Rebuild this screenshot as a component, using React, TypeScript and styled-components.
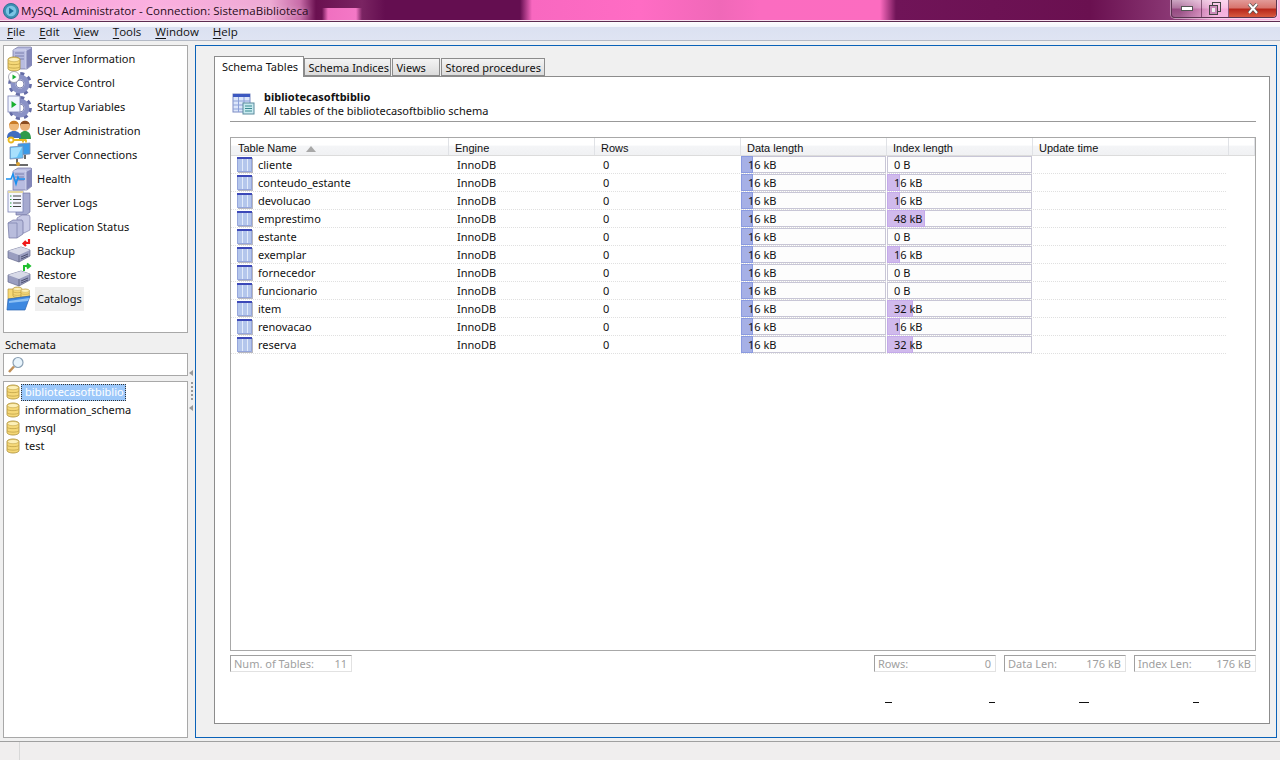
import React from 'react'
import styled, { createGlobalStyle } from 'styled-components'

const GlobalStyle = createGlobalStyle`
  html, body { margin: 0; padding: 0; height: 100%; overflow: hidden; }
  body { font-family: "Noto Sans", Tahoma, sans-serif; font-size: 11px; color: #111; background: #f0f0f0; }
  #root { height: 100%; }
`

const Window = styled.div`
  width: 1280px;
  height: 760px;
  display: flex;
  flex-direction: column;
  background: #f0f0f0;
`
const TitleBar = styled.div`
  height: 21px;
  flex: none;
  display: flex;
  align-items: center;
  padding-left: 3px;
  gap: 2px;
  position: relative;
  border-bottom: 1px solid #5c2c50;
  background:
    linear-gradient(180deg, transparent 20px, #f6dcec 20px),
    linear-gradient(90deg, rgba(240,110,190,0), #f070c0 6px, #f478c6 34px, rgba(240,110,190,0)) 322px 8px / 40px 12px no-repeat,
    linear-gradient(90deg, #f8a0d8 0, #fbb0e0 150px, #eeaad4 270px, #c86ca8 300px, #6a1050 316px, #7a2462 362px, #640e50 385px, #640e50 520px, #f868c0 532px, #ff6cc4 640px, #f068b8 720px, #fb6cc0 760px, #fc6cc0 880px, #701458 896px, #6a1050 1090px, #8e3c78 1180px, #f4a4d8 1215px, #fbb6e2 1280px);
`
const TitleText = styled.span`
  font-family: "Open Sans", "Noto Sans", sans-serif;
  font-size: 11.55px;
  color: #2a0a20;
  text-shadow: 0 0 6px rgba(255,255,255,.55);
`
const CaptionButtons = styled.div`
  position: absolute;
  right: 3px;
  top: 0;
  height: 17px;
  display: flex;
  border: 1px solid #5a3450;
  border-top: none;
  border-radius: 0 0 4px 4px;
  overflow: hidden;
  box-shadow: 0 0 0 1px rgba(255,255,255,.45);
`
const CaptionButton = styled.div<{ $w: number; $close?: boolean }>`
  width: ${p => p.$w}px;
  display: flex;
  align-items: center;
  justify-content: center;
  border-right: 1px solid rgba(60,20,50,.55);
  background: ${p => p.$close
    ? 'linear-gradient(180deg, #e29a98 0, #d8756e 45%, #b8281c 55%, #d85a40 100%)'
    : 'linear-gradient(180deg, rgba(255,255,255,.55) 0, rgba(255,255,255,.3) 45%, rgba(255,255,255,.08) 55%, rgba(255,255,255,.18) 100%)'};
  &:last-child { border-right: none; }
`
const MenuBar = styled.div`
  height: 18px;
  flex: none;
  display: flex;
  align-items: center;
  padding-left: 7px;
  gap: 14px;
  border-bottom: 1px solid #b4bac6;
  background: linear-gradient(180deg, #fdfdfe 0, #f3f5fb 25%, #dbe1f1 30%, #dfe4f3 100%);
`
const MenuItem = styled.span`
  font-family: "Open Sans", "Noto Sans", sans-serif;
  font-size: 11.5px;
  u { text-underline-offset: 2px; }
`
const Body = styled.div`
  flex: 1;
  min-height: 0;
  display: flex;
  padding: 4px 3px 3px 3px;
`
const Side = styled.div`
  width: 185px;
  flex: none;
  display: flex;
  flex-direction: column;
`
const NavPanel = styled.div`
  height: 288px;
  flex: none;
  box-sizing: border-box;
  background: #fff;
  border: 1px solid #a8a8a8;
  padding: 1px 0 0 2px;
`
const NavRow = styled.div`
  height: 24px;
  display: flex;
  align-items: center;
`
const NavIcon = styled.svg`
  width: 26px;
  height: 26px;
  flex: none;
  margin-right: 3px;
`
const NavLabel = styled.span<{ $active?: boolean }>`
  height: 24px;
  line-height: 24px;
  padding: 0 2px;
  background: ${p => (p.$active ? '#efefef' : 'transparent')};
`
const SectionLabel = styled.div`
  height: 20px;
  line-height: 24px;
  padding-left: 2px;
`
const SearchBox = styled.div`
  height: 23px;
  box-sizing: border-box;
  border: 1px solid #a8a8a8;
  background: #fff;
  padding: 2px 0 0 3px;
  display: flex;
`
const SchemaList = styled.div`
  flex: 1;
  margin-top: 5px;
  box-sizing: border-box;
  border: 1px solid #a8a8a8;
  background: #fff;
  padding: 1px 0 0 1px;
`
const SchemaRow = styled.div`
  height: 18px;
  display: flex;
  align-items: center;
  gap: 0;
`
const SchemaName = styled.span<{ $active?: boolean }>`
  padding: 0 2px 0 4px;
  height: 17px;
  line-height: 16px;
  color: ${p => (p.$active ? '#fff' : '#111')};
  background: ${p => (p.$active ? '#9cc8fa' : 'transparent')};
  outline: ${p => (p.$active ? '1px dotted #333' : 'none')};
  outline-offset: -1px;
`
const Splitter = styled.div`
  width: 7px;
  flex: none;
  position: relative;
`
const ArrowMark = styled.i<{ $top: number }>`
  position: absolute;
  left: 1px;
  top: ${p => p.$top}px;
  border: 3px solid transparent;
  border-right: 4px solid #999;
  border-left: none;
`
const Grip = styled.i`
  position: absolute;
  left: 3px;
  top: 337px;
  width: 2px;
  height: 18px;
  background: repeating-linear-gradient(180deg, #999 0 2px, transparent 2px 4px);
`
const Main = styled.div`
  flex: 1;
  box-sizing: border-box;
  border: 1px solid #0a62b8;
  padding: 10px 6px 13px 18px;
  display: flex;
  flex-direction: column;
`
const Tabs = styled.div`
  height: 20px;
  flex: none;
  display: flex;
  align-items: flex-end;
  position: relative;
  z-index: 1;
`
const Tab = styled.div<{ $active?: boolean; $w: number }>`
  box-sizing: border-box;
  width: ${p => p.$w}px;
  height: ${p => (p.$active ? 21 : 18)}px;
  margin-bottom: ${p => (p.$active ? -1 : 0)}px;
  padding-left: ${p => (p.$active ? 7 : 3.5)}px;
  line-height: ${p => (p.$active ? 19 : 18)}px;
  white-space: nowrap;
  border: 1px solid #8c8c8c;
  border-bottom: ${p => (p.$active ? 'none' : '1px solid #8c8c8c')};
  margin-right: ${p => (p.$active ? 0 : 1)}px;
  background: ${p => (p.$active ? '#fff' : 'linear-gradient(180deg, #f4f4f4, #dcdcdc)')};
`
const TabBody = styled.div`
  flex: 1;
  box-sizing: border-box;
  border: 1px solid #8c8c8c;
  background: #fff;
  padding: 13px 13px 0 15px;
  display: flex;
  flex-direction: column;
`
const Heading = styled.div`
  height: 31px;
  flex: none;
  display: flex;
  border-bottom: 1px solid #999;
`
const HeadingIcon = styled.svg`
  width: 24px;
  height: 24px;
  margin: 3px 8px 0 2px;
`
const HeadingText = styled.div`
  line-height: 14px;
  b { font-weight: 700; display: block; }
`
const TableBox = styled.div`
  margin-top: 15px;
  height: 514px;
  flex: none;
  box-sizing: border-box;
  border: 1px solid #a8a8a8;
`
const HeaderRow = styled.div`
  height: 17px;
  display: flex;
  border-bottom: 1px solid #dcdcdc;
  background: linear-gradient(180deg, #fff 0, #fff 40%, #f4f5f7 50%, #f0f1f3 100%);
`
const HeaderCell = styled.div<{ $w?: number }>`
  ${p => (p.$w ? `width: ${p.$w}px; flex: none;` : 'flex: 1;')}
  box-sizing: border-box;
  padding: 4px 0 0 6px;
  line-height: 13px;
  border-right: 1px solid #e0e2e6;
  display: flex;
  align-items: center;
  font-family: "Liberation Sans", sans-serif;
  font-size: 11px;
  gap: 9px;
  &:first-child { padding-left: 7px; }
`
const SortMark = styled.i`
  border: 5px solid transparent;
  border-bottom: 6px solid #a8a8a8;
  border-top: none;
`
const DataRow = styled.div`
  height: 18px;
  width: 995px;
  display: flex;
  align-items: center;
  border-bottom: 1px dotted #e0e0e0;
  box-sizing: border-box;
`
const NameCell = styled.div`
  width: 219px;
  flex: none;
  display: flex;
  align-items: center;
  padding-left: 6px;
  box-sizing: border-box;
  gap: 5px;
`
const TextCell = styled.div<{ $w: number }>`
  width: ${p => p.$w}px;
  flex: none;
  box-sizing: border-box;
  padding-left: 7px;
`
const BarCell = styled.div<{ $w: number }>`
  width: ${p => p.$w}px;
  flex: none;
  height: 17px;
  box-sizing: border-box;
  border: 1px solid #c8c6d6;
  background: #fdfdfd;
  position: relative;
  margin-right: 1px;
  line-height: 15px;
  padding-left: 6px;
`
const BarFill = styled.i<{ $kind: 'data' | 'index' }>`
  position: absolute;
  left: -1px;
  top: -1px;
  bottom: -1px;
  box-sizing: border-box;
  background: ${p => (p.$kind === 'data' ? '#a6b0e6' : '#d0baec')};
  border: 1px solid ${p => (p.$kind === 'data' ? '#8a9ae0' : '#c4aaea')};
`
const BarText = styled.span`
  position: relative;
`
const Summary = styled.div`
  margin-top: 4px;
  height: 17px;
  flex: none;
  display: flex;
  gap: 8px;
`
const SummaryBox = styled.div<{ $push?: boolean }>`
  width: 122px;
  box-sizing: border-box;
  margin-right: ${p => (p.$push ? 'auto' : '0')};
  border: 1px solid #e2e2e2;
  border-top-color: #a0a0a0;
  border-left-color: #a0a0a0;
  padding: 0 4px 0 3px;
  display: flex;
  justify-content: space-between;
  line-height: 15px;
  color: #a0a0a0;
`
const Dashes = styled.div`
  margin-top: 25px;
  height: 12px;
  position: relative;
`
const Dash = styled.i<{ $x: number; $w: number }>`
  position: absolute;
  left: ${p => p.$x}px;
  top: 5px;
  width: ${p => p.$w}px;
  height: 1px;
  background: #111;
`
const StatusBar = styled.div`
  height: 18px;
  flex: none;
  border-top: 1px solid #a0a0a0;
  background: #f0eeee;
  display: flex;
`
const StatusCell = styled.div`
  width: 19px;
  border-right: 1px solid #d8d8d8;
`

const Cyl = ({ x, y, s = 1 }: { x: number; y: number; s?: number }) => (
  <g transform={`translate(${x} ${y}) scale(${s})`}>
    <path d="M0 2.500C0 1 3 0 6 0s6 1 6 2.500v9C12 13 9 14 6 14s-6-1-6-2.500z" fill="#f5d878" stroke="#a88a30" strokeWidth=".8" />
    <ellipse cx="6" cy="2.600" rx="5.600" ry="2.100" fill="#fdf0b8" stroke="#b89a40" strokeWidth=".5" />
    <path d="M.5 6.500c1 1.500 10 1.500 11 0M.5 10c1 1.500 10 1.500 11 0" fill="none" stroke="#b89a40" strokeWidth=".7" />
  </g>
)

const Tower = ({ x = 6, y = 1 }: { x?: number; y?: number }) => (
  <g transform={`translate(${x} ${y})`}>
    <path d="M1 3l5-3h13l1 1v17l-5 4H1z" fill="#b8bce0" stroke="#7074a0" strokeWidth=".7" />
    <path d="M14 4l6-3v17l-6 4z" fill="#8286b8" />
    <path d="M1 3h13v19" fill="none" stroke="#e4e6f6" strokeWidth=".7" />
    <path d="M3 6h9M3 9h9M3 12h9" stroke="#7478a8" strokeWidth=".9" />
  </g>
)

const Gear = () => (
  <g>
    <circle cx="14" cy="14" r="10.200" fill="none" stroke="#646ca6" strokeWidth="3.400" strokeDasharray="4 4" />
    <circle cx="14" cy="14" r="7" fill="none" stroke="#8a92c6" strokeWidth="5" />
    <circle cx="14" cy="14" r="4" fill="#fff" stroke="#5e669e" strokeWidth=".8" />
  </g>
)

const Drive = () => (
  <g>
    <path d="M2 13l13-4 9 3v6l-11 6-11-4z" fill="#9a9ec0" stroke="#666a8e" strokeWidth=".7" />
    <path d="M2 13l11 4 11-5-9-3z" fill="#d8dae8" />
    <path d="M13 17v7" stroke="#5c607e" strokeWidth=".8" />
    <path d="M15 19l7-3M15 21l7-3" stroke="#4c5070" strokeWidth="1" />
  </g>
)

const icons: React.ReactNode[] = [
  <><Tower /><Cyl x={2} y={11} /></>,
  <><Gear /><circle cx="8" cy="7" r="5.500" fill="#fff" stroke="#8a8a9a" strokeWidth=".7" /><path d="M6.500 4.500l4 2.500-4 2.500z" fill="#18b030" /></>,
  <><Gear /><rect x="2" y="2" width="12" height="16" fill="#f0f4ff" stroke="#7c82b4" strokeWidth=".8" /><path d="M5.500 7l5 3.500-5 3.500z" fill="#18b030" /></>,
  <g transform="translate(0 1)">
    <circle cx="19" cy="7" r="5" fill="#e8b078" /><path d="M14 7c0-7 10-7 10 0l-1-2h-8z" fill="#8a4c20" />
    <path d="M13 20c0-6 3-8 6-8s6 2 6 8z" fill="#2f9a4a" />
    <circle cx="8" cy="7" r="5" fill="#eeb878" /><path d="M3 7c0-7 10-7 10 0l-1-2H4z" fill="#c87c28" />
    <path d="M1 19c0-5 3-7 7-7s7 2 7 7z" fill="#3f6cc0" />
    <circle cx="5" cy="21" r="2.500" fill="#fff" stroke="#e8b820" strokeWidth="1.800" /><path d="M7.500 21h13M17 21v2.500M20 21v2.500" stroke="#e8b820" strokeWidth="1.800" fill="none" />
  </g>,
  <>
    <path d="M12 2l12-1v11l-12 1z" fill="#3a9ae8" stroke="#7a8ab0" strokeWidth=".8" />
    <path d="M4 5l13-1v12l-13 1z" fill="#66c4f8" stroke="#7a8ab0" strokeWidth=".8" />
    <path d="M5 6l11-1-5 10-6 1z" fill="#a8e0fc" />
    <path d="M11 17v4M19 13v4M3 23h19" stroke="#3a3a3a" strokeWidth="1.500" fill="none" /><circle cx="12" cy="22" r="2" fill="#d8a030" />
  </>,
  <><Tower x={6} y={2} /><path d="M0 13h5l2-5 3 10 2-7 1 2h6" fill="none" stroke="#1890f0" strokeWidth="1.500" /></>,
  <>
    <path d="M10 3h14v19l-4 3H10z" fill="#a6aad0" stroke="#7074a0" strokeWidth=".7" />
    <rect x="2" y="1" width="15" height="21" fill="#f4f6ff" stroke="#7c82b4" strokeWidth=".8" />
    <path d="M2 1h15v2H2z" fill="#e4d8a0" />
    <path d="M7 6h8M7 9.500h8M7 13h8M7 16.500h8" stroke="#444" strokeWidth="1" /><path d="M4 6h1.500M4 9.500h1.500M4 13h1.500M4 16.500h1.500" stroke="#2a9a40" strokeWidth="1" />
  </>,
  <>
    <path d="M11 4l5-3h7l1 2v13l-6 3h-7z" fill="#c8cae6" stroke="#7c80aa" strokeWidth=".7" />
    <path d="M2 9l5-3h9l1 2v12l-6 4H3z" fill="#b8bcdc" stroke="#7074a0" strokeWidth=".7" />
    <path d="M2 9h9v15" fill="none" stroke="#8286b0" strokeWidth=".8" />
  </>,
  <><Drive /><path d="M23 1v4h-5M20 3l-2.500 2.500L20 8" stroke="#f01818" strokeWidth="2.200" fill="none" /></>,
  <><Drive /><path d="M18 9V4h5M21 1.500L24 4l-3 2.500" stroke="#20c030" strokeWidth="2" fill="none" /></>,
  <>
    <path d="M2 3h10l2 2h8v8H2z" fill="#f6d874" stroke="#b89a40" strokeWidth=".7" />
    <Cyl x={7} y={1} s={0.75} /><Cyl x={15} y={3} s={0.7} />
    <path d="M2 13l22-3-5 14H1z" fill="#3d88e0" stroke="#2a62b0" strokeWidth=".7" />
    <path d="M3 15l20-3-1 3-19 2z" fill="#8cc0f4" />
  </>
]

const navItems = ['Server Information', 'Service Control', 'Startup Variables', 'User Administration', 'Server Connections', 'Health', 'Server Logs', 'Replication Status', 'Backup', 'Restore', 'Catalogs']

const rows: [string, number, number][] = [
  ['cliente', 16, 0], ['conteudo_estante', 16, 16], ['devolucao', 16, 16], ['emprestimo', 16, 48],
  ['estante', 16, 0], ['exemplar', 16, 16], ['fornecedor', 16, 0], ['funcionario', 16, 0],
  ['item', 16, 32], ['renovacao', 16, 16], ['reserva', 16, 32]
]

const size = (n: number) => (n ? `${n} kB` : '0 B')

const TableIcon = () => (
  <svg width="16" height="16" viewBox="0 0 16 16">
    <rect x="0" y="0" width="15" height="15" fill="#b4c6ec" />
    <rect x="0" y="0" width="15" height="2" fill="#3c48b8" />
    <path d="M.5 2v12.500h14V2" fill="none" stroke="#96a6dc" />
    <path d="M5.500 2v12M10.500 2v12" stroke="#e2eafa" />
    <path d="M1 15.500h15M15.500 1v15" stroke="#b8b8c0" />
  </svg>
)

export default function App() {
  return (
    <Window>
      <GlobalStyle />
      <TitleBar>
        <svg width="16" height="16" viewBox="0 0 17 17">
          <circle cx="8.500" cy="8.500" r="8" fill="#3e8fb4" stroke="#2a6e90" />
          <circle cx="8.500" cy="8.500" r="5.500" fill="#7cc4e4" />
          <path d="M6.500 5l5 3.500-5 3.500z" fill="#1c6c98" />
        </svg>
        <TitleText>MySQL Administrator - Connection: SistemaBiblioteca</TitleText>
        <CaptionButtons>
          <CaptionButton $w={29}>
            <svg width="12" height="6" viewBox="0 0 12 6"><rect x=".5" y=".5" width="11" height="4" fill="#fff" stroke="#555" /></svg>
          </CaptionButton>
          <CaptionButton $w={26}>
            <svg width="12" height="13" viewBox="0 0 12 13"><rect x="3.500" y=".5" width="8" height="9" fill="none" stroke="#444" /><rect x=".5" y="3.500" width="8" height="9" fill="#c98ab8" stroke="#444" /><rect x="3" y="6" width="3" height="4" fill="#eee" /></svg>
          </CaptionButton>
          <CaptionButton $w={47} $close>
            <svg width="12" height="11" viewBox="0 0 12 11"><path d="M2 1l8 9M10 1l-8 9" stroke="#555" strokeWidth="3.400" /><path d="M2 1l8 9M10 1l-8 9" stroke="#fff" strokeWidth="2" /></svg>
          </CaptionButton>
        </CaptionButtons>
      </TitleBar>
      <MenuBar>
        <MenuItem><u>F</u>ile</MenuItem>
        <MenuItem><u>E</u>dit</MenuItem>
        <MenuItem><u>V</u>iew</MenuItem>
        <MenuItem><u>T</u>ools</MenuItem>
        <MenuItem><u>W</u>indow</MenuItem>
        <MenuItem><u>H</u>elp</MenuItem>
      </MenuBar>
      <Body>
        <Side>
          <NavPanel>
            {navItems.map((name, i) => (
              <NavRow key={name}>
                <NavIcon viewBox="0 0 26 26">{icons[i]}</NavIcon>
                <NavLabel $active={name === 'Catalogs'}>{name}</NavLabel>
              </NavRow>
            ))}
          </NavPanel>
          <SectionLabel>Schemata</SectionLabel>
          <SearchBox>
            <svg width="18" height="18" viewBox="0 0 18 18">
              <circle cx="11" cy="6.500" r="5" fill="#e8f4fc" stroke="#8aa0b4" strokeWidth="1.200" />
              <path d="M7 10.500L2 16" stroke="#c09058" strokeWidth="2.500" />
            </svg>
          </SearchBox>
          <SchemaList>
            {['bibliotecasoftbiblio', 'information_schema', 'mysql', 'test'].map((name, i) => (
              <SchemaRow key={name}>
                <svg width="16" height="16" viewBox="0 0 14 16"><Cyl x={1} y={1} /></svg>
                <SchemaName $active={i === 0}>{name}</SchemaName>
              </SchemaRow>
            ))}
          </SchemaList>
        </Side>
        <Splitter>
          <ArrowMark $top={325} />
          <Grip />
          <ArrowMark $top={360} />
        </Splitter>
        <Main>
          <Tabs>
            <Tab $active $w={90}>Schema Tables</Tab>
            <Tab $w={87}>Schema Indices</Tab>
            <Tab $w={48}>Views</Tab>
            <Tab $w={104}>Stored procedures</Tab>
          </Tabs>
          <TabBody>
            <Heading>
              <HeadingIcon viewBox="0 0 24 24">
                <rect x="1" y="1" width="17" height="18" fill="#dce6fa" stroke="#7c8cc4" />
                <rect x="1" y="1" width="17" height="3" fill="#3c58c0" />
                <path d="M1 8h17M1 12h17M1 16h17M6.500 4v15M12 4v15" stroke="#8ca0d8" />
                <rect x="11" y="10" width="11" height="11" fill="#c8eaf0" stroke="#5a8a9c" />
                <path d="M13 13h7M13 15.500h7M13 18h7" stroke="#3a8a90" />
              </HeadingIcon>
              <HeadingText>
                <b>bibliotecasoftbiblio</b>
                All tables of the bibliotecasoftbiblio schema
              </HeadingText>
            </Heading>
            <TableBox>
              <HeaderRow>
                <HeaderCell $w={218}>Table Name <SortMark /></HeaderCell>
                <HeaderCell $w={146}>Engine</HeaderCell>
                <HeaderCell $w={146}>Rows</HeaderCell>
                <HeaderCell $w={146}>Data length</HeaderCell>
                <HeaderCell $w={146}>Index length</HeaderCell>
                <HeaderCell $w={196}>Update time</HeaderCell>
                <HeaderCell />
              </HeaderRow>
              {rows.map(([name, data, index]) => (
                <DataRow key={name}>
                  <NameCell><TableIcon />{name}</NameCell>
                  <TextCell $w={146}>InnoDB</TextCell>
                  <TextCell $w={145}>0</TextCell>
                  <BarCell $w={145}>
                    <BarFill $kind="data" style={{ width: 12 }} />
                    <BarText>{size(data)}</BarText>
                  </BarCell>
                  <BarCell $w={145}>
                    {index > 0 && <BarFill $kind="index" style={{ width: index * 0.8 }} />}
                    <BarText>{size(index)}</BarText>
                  </BarCell>
                </DataRow>
              ))}
            </TableBox>
            <Summary>
              <SummaryBox $push><span>Num. of Tables:</span><span>11</span></SummaryBox>
              <SummaryBox><span>Rows:</span><span>0</span></SummaryBox>
              <SummaryBox><span>Data Len:</span><span>176 kB</span></SummaryBox>
              <SummaryBox><span>Index Len:</span><span>176 kB</span></SummaryBox>
            </Summary>
            <Dashes>
              <Dash $x={655} $w={7} />
              <Dash $x={759} $w={6} />
              <Dash $x={849} $w={10} />
              <Dash $x={963} $w={6} />
            </Dashes>
          </TabBody>
        </Main>
      </Body>
      <StatusBar><StatusCell /></StatusBar>
    </Window>
  )
}
